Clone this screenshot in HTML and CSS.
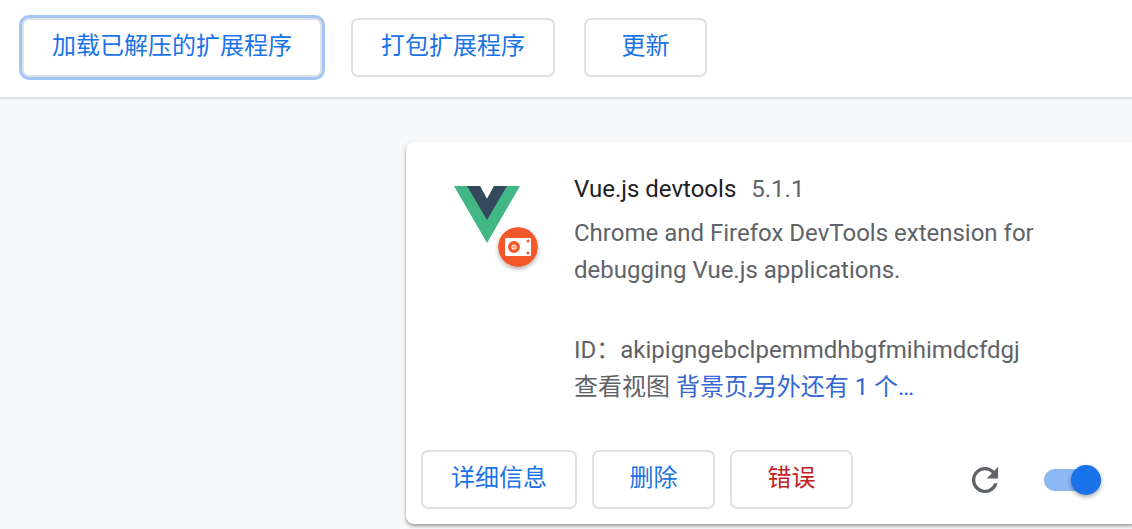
FILE: index.html
```html
<!DOCTYPE html>
<html lang="zh-CN">
<head>
<meta charset="utf-8">
<meta name="viewport" content="width=device-width, initial-scale=1">
<title>扩展程序</title>
<link rel="stylesheet" href="styles.css">
</head>
<body>
<header class="toolbar">
  <button class="btn btn-focused" type="button">加载已解压的扩展程序</button>
  <button class="btn" type="button">打包扩展程序</button>
  <button class="btn" type="button">更新</button>
</header>
<main class="content">
  <article class="card">
    <div class="card-main">
      <div class="icon-wrap">
        <svg class="logo" viewBox="0 0 66 57" aria-hidden="true">
          <path fill="#41b883" d="M0 0h26l7 13 7-13h26L33 57z"/>
          <path fill="#34495e" d="M13 0h13l7 13 7-13h13L33 34z"/>
        </svg>
        <svg class="badge" viewBox="0 0 40 40" aria-hidden="true">
          <circle cx="20" cy="20" r="20" fill="#f4572a"/>
          <rect x="7" y="11" width="26" height="18" rx="1" fill="#fff"/>
          <circle cx="16" cy="20" r="4.300" fill="#fff" stroke="#f4572a" stroke-width="3.400"/>
          <circle cx="16" cy="20" r="1.800" fill="#f89b7e"/>
          <circle cx="30" cy="14" r="1.500" fill="#f4572a"/>
          <circle cx="30" cy="26" r="1.500" fill="#f4572a"/>
        </svg>
      </div>
      <div class="info">
        <div class="title-row">
          <h2 class="name">Vue.js devtools</h2>
          <span class="version">5.1.1</span>
        </div>
        <p class="description">Chrome and Firefox DevTools extension for debugging Vue.js applications.</p>
        <p class="meta">ID：akipigngebclpemmdhbgfmihimdcfdgj</p>
        <p class="meta">查看视图 <a class="view-link" href="#views">背景页,另外还有 1 个…</a></p>
      </div>
    </div>
    <footer class="actions">
      <button class="btn" type="button">详细信息</button>
      <button class="btn" type="button">删除</button>
      <button class="btn btn-error" type="button">错误</button>
      <button class="reload" type="button" aria-label="重新加载">
        <svg class="reload-icon" viewBox="4 4 16 16" aria-hidden="true">
          <path fill="#5f6368" d="M17.650 6.350A7.960 7.960 0 0 0 12 4a8 8 0 1 0 7.730 10h-2.080A6 6 0 1 1 12 6c1.660 0 3.140.690 4.220 1.780L13 11h7V4z"/>
        </svg>
      </button>
      <input class="toggle" type="checkbox" role="switch" aria-label="启用 Vue.js devtools" checked>
    </footer>
  </article>
</main>
</body>
</html>
```
FILE: styles.css
```css
* {
  box-sizing: border-box;
}

body {
  margin: 0;
  min-height: 100vh;
  overflow-x: hidden;
  background: #f8f9fa;
  color: #5f6368;
  font-family: Roboto, "Noto Sans CJK SC", sans-serif;
  font-size: 24px;
  line-height: 36px;
}

.toolbar {
  display: flex;
  gap: 29px;
  padding: 18px 22px 20px;
  background: #fff;
  border-bottom: 2px solid #e1e2e4;
}

.btn {
  height: 59px;
  min-width: 123px;
  padding: 0 28px 3px;
  border: 2px solid #dfe1e6;
  border-radius: 7px;
  background: #fff;
  color: #1a73e8;
  font: inherit;
  white-space: nowrap;
}

.btn-focused {
  box-shadow: 0 0 0 3px #a3c5f6;
}

.btn-error {
  color: #c5221f;
}

.content {
  padding: 43px 0 6px;
  overflow: hidden;
}

.card {
  margin: 0 -7px 0 406px;
  border-radius: 8px;
  background: #fff;
  box-shadow: 0 2px 3px rgba(60, 64, 67, 0.4), 0 2px 6px rgba(60, 64, 67, 0.16);
}

.card-main {
  display: flex;
  gap: 36px;
  padding: 29px 37px 44px 48px;
}

.icon-wrap {
  position: relative;
  flex: none;
  width: 84px;
  height: 96px;
  padding-top: 15px;
}

.logo {
  display: block;
  width: 66px;
  height: 57px;
}

.badge {
  position: absolute;
  right: 0;
  bottom: 0;
  width: 40px;
  height: 40px;
  border-radius: 50%;
  box-shadow: 0 2px 4px rgba(0, 0, 0, 0.3);
}

.info {
  flex: 1;
}

.title-row {
  display: flex;
  gap: 15px;
  margin-bottom: 8px;
}

.name {
  margin: 0;
  color: #202124;
  font-size: 24px;
  font-weight: 400;
}

.description {
  max-width: 480px;
  margin: 0 0 43px;
  line-height: 37px;
}

.meta {
  margin: 0;
  line-height: 37px;
}

.view-link {
  color: #3367d6;
  text-decoration: none;
}

.actions {
  display: flex;
  align-items: center;
  gap: 15px;
  padding: 0 38px 15px 15px;
}

.reload {
  display: grid;
  place-items: center;
  width: 48px;
  height: 48px;
  margin-left: auto;
  padding: 0;
  border: 0;
  background: none;
}

.reload-icon {
  width: 26px;
  height: 26px;
}

.toggle {
  position: relative;
  appearance: none;
  width: 57px;
  height: 22px;
  margin: 0 0 0 20px;
  border-radius: 11px;
  background: #8cb8f4;
}

.toggle::after {
  content: "";
  position: absolute;
  top: -4px;
  right: 0;
  width: 30px;
  height: 30px;
  border-radius: 50%;
  background: #1a73e8;
  box-shadow: 0 2px 4px rgba(0, 0, 0, 0.35);
}
```
